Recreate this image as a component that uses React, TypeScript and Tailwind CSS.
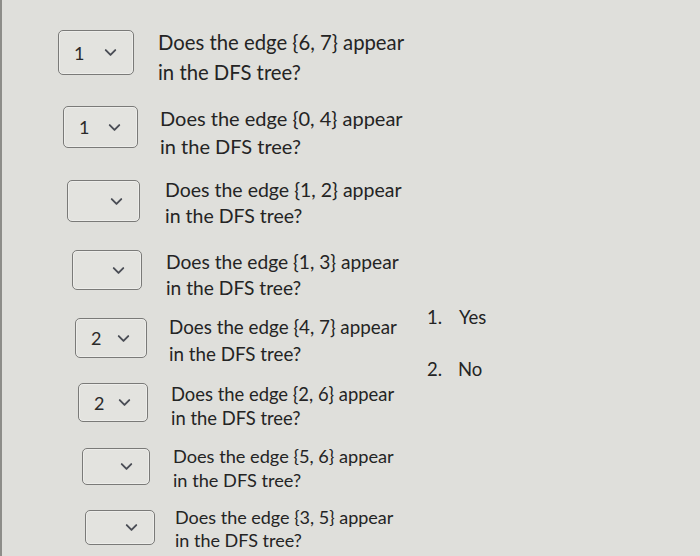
import { ChevronDown } from "lucide-react";

const questions = [
  { edge: "{6, 7}", value: "1", row: "mt-[27px] ml-[56px] gap-[24px] text-[20.3px] leading-[30px]", box: "mt-[3px] w-[76px] h-[45px]" },
  { edge: "{0, 4}", value: "1", row: "mt-[17px] ml-[61px] gap-[22px] text-[20px] leading-[28px]", box: "mt-[2px] w-[75px] h-[42px]" },
  { edge: "{1, 2}", value: "", row: "mt-[17px] ml-[65px] gap-[25px] text-[19.5px] leading-[26px]", box: "mt-[3px] w-[73px] h-[42px]" },
  { edge: "{1, 3}", value: "", row: "mt-[20px] ml-[70px] gap-[24px] text-[19.2px] leading-[26px]", box: "mt-[1px] w-[70px] h-[40px]" },
  { edge: "{4, 7}", value: "2", row: "mt-[12px] ml-[73px] gap-[22px] text-[18.8px] leading-[27px]", box: "mt-[5px] w-[72px] h-[40px]" },
  { edge: "{2, 6}", value: "2", row: "mt-[15px] ml-[76px] gap-[23px] text-[18.4px] leading-[24px]", box: "mt-[1px] w-[70px] h-[39px]" },
  { edge: "{5, 6}", value: "", row: "mt-[14px] ml-[80px] gap-[23px] text-[18.2px] leading-[24px]", box: "mt-[4px] w-[68px] h-[37px]" },
  { edge: "{3, 5}", value: "", row: "mt-[14px] ml-[83px] gap-[20px] text-[18px] leading-[23px]", box: "mt-[4px] w-[70px] h-[35px]" },
];

function Select({ value, className }: { value: string; className: string }) {
  return (
    <div
      className={`${className} flex shrink-0 items-center rounded-[5px] border border-[#7a7a78] bg-[#e3e3df] pl-[15px] pr-[13px] shadow-[inset_0_0_0_1px_rgba(255,255,255,0.35)]`}
    >
      <span className="text-[18px] text-[#2a2a2a]">{value}</span>
      <ChevronDown className="ml-auto h-[19px] w-[19px] text-[#4a4d55]" strokeWidth={2.4} />
    </div>
  );
}

export default function App() {
  return (
    <div className="flex h-[556px] w-[700px] overflow-hidden border-l-[2px] border-[#8d8d89] bg-[#dfdfdb] font-['Lato',sans-serif] text-[#242424]">
      <div className="flex w-[420px] flex-col">
        {questions.map((q) => (
          <div key={q.edge} className={`flex items-start ${q.row}`}>
            <Select value={q.value} className={q.box} />
            <p className="whitespace-nowrap">
              Does the edge {q.edge} appear
              <br />
              in the DFS tree?
            </p>
          </div>
        ))}
      </div>

      <ol className="ml-[5px] mt-[304px] flex flex-col gap-[26px] text-[18.5px] leading-[26px]">
        <li className="flex">
          <span className="w-[32px]">1.</span>
          <span>Yes</span>
        </li>
        <li className="flex">
          <span className="w-[31px]">2.</span>
          <span>No</span>
        </li>
      </ol>
    </div>
  );
}
